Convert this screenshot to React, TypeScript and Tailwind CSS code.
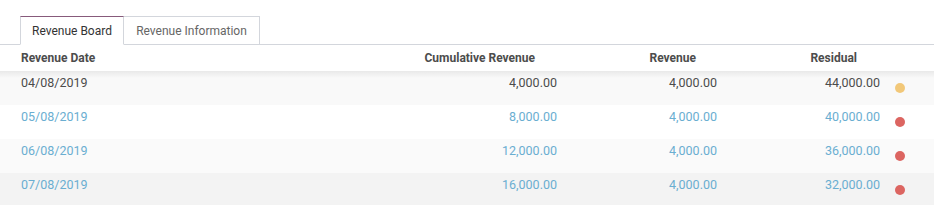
import React from 'react';

type Line = {
  date: string;
  cumulative: string;
  revenue: string;
  residual: string;
  posted: boolean;
};

const lines: Line[] = [
  { date: '04/08/2019', cumulative: '4,000.00', revenue: '4,000.00', residual: '44,000.00', posted: true },
  { date: '05/08/2019', cumulative: '8,000.00', revenue: '4,000.00', residual: '40,000.00', posted: false },
  { date: '06/08/2019', cumulative: '12,000.00', revenue: '4,000.00', residual: '36,000.00', posted: false },
  { date: '07/08/2019', cumulative: '16,000.00', revenue: '4,000.00', residual: '32,000.00', posted: false },
];

const rowBg = [
  'bg-[linear-gradient(to_bottom,#e9e9e9,#f9f9f9_7px)]',
  'bg-white',
  'bg-[#fafafa]',
  'bg-[#f3f3f3]',
];

const App: React.FC = () => {
  return (
    <div className="w-[934px] h-[205px] overflow-hidden bg-white pt-[16px] font-['Roboto',sans-serif] text-[12.5px] text-[#4c4c4c]">
      <nav className="flex border-b border-[#d3d6dc] pl-[20px] text-[12px]">
        <div className="-mb-px h-[29px] w-[104px] border-x border-t border-x-[#d3d6dc] border-t-[#875a7b] border-b border-b-white bg-white flex items-center justify-center text-[#333]">
          Revenue Board
        </div>
        <div className="h-[28px] w-[136px] border-r border-t border-[#d3d6dc] flex items-center justify-center text-[#666]">
          Revenue Information
        </div>
      </nav>

      <table className="w-full table-fixed border-collapse">
        <colgroup>
          <col className="w-[380px]" />
          <col className="w-[185px]" />
          <col className="w-[160px]" />
          <col className="w-[163px]" />
          <col />
        </colgroup>
        <thead>
          <tr className="h-[26px] font-bold text-[12px]">
            <th className="pl-[21px] text-left align-middle">Revenue Date</th>
            <th className="pr-[30px] text-right align-middle">Cumulative Revenue</th>
            <th className="pr-[29px] text-right align-middle">Revenue</th>
            <th className="pr-[31px] text-right align-middle">Residual</th>
            <th></th>
          </tr>
        </thead>
        <tbody>
          {lines.map((line, i) => (
            <tr key={line.date} className={`h-[34px] ${rowBg[i]} ${line.posted ? 'text-[#4c4c4c]' : 'text-[#6aaed1]'}`}>
              <td className="pl-[21px] pt-[3px] align-top leading-[18px]">{line.date}</td>
              <td className="pr-[8px] pt-[3px] text-right align-top leading-[18px]">{line.cumulative}</td>
              <td className="pr-[8px] pt-[3px] text-right align-top leading-[18px]">{line.revenue}</td>
              <td className="pr-[8px] pt-[3px] text-right align-top leading-[18px]">{line.residual}</td>
              <td className="pl-[7px] align-middle">
                <span
                  className={`block h-[10px] w-[10px] rounded-full ${line.posted ? 'bg-[#f2c879]' : 'bg-[#dc6561]'}`}
                />
              </td>
            </tr>
          ))}
        </tbody>
      </table>
    </div>
  );
};

export default App;
